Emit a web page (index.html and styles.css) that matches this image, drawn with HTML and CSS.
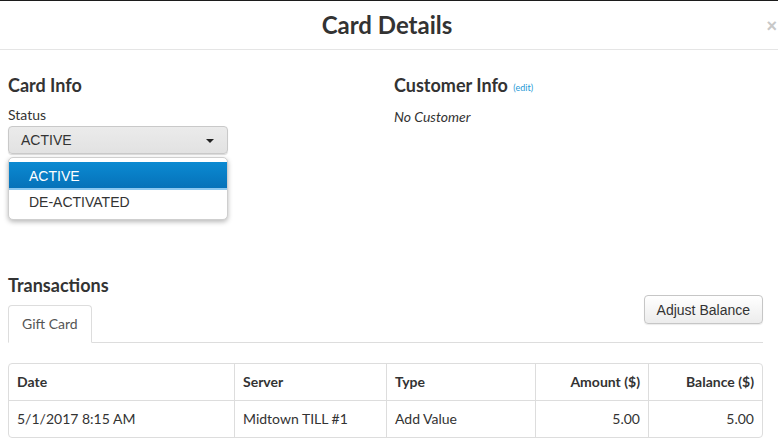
FILE: index.html
```html
<!DOCTYPE html>
<html lang="en">

<head>
    <meta charset="UTF-8">
    <meta name="viewport" content="width=device-width, initial-scale=1.0">
    <title>Card Details</title>
    <link rel="stylesheet" href="styles.css">
</head>

<body>
    <div class="modal">
        <!-- Header -->
        <div class="modal-header">
            <h2 class="modal-title">Card Details</h2>
            <span class="close">&times;</span>
        </div>

        <div class="modal-body">
            <div class="info-row">
                <div class="info-col">
                    <h3>Card Info</h3>
                    <div class="label">Status</div>
                    <div class="select-wrap">
                        <div class="select">ACTIVE<span class="caret"></span></div>
                        <!-- open dropdown -->
                        <ul class="select-menu">
                            <li class="selected">ACTIVE</li>
                            <li>DE-ACTIVATED</li>
                        </ul>
                    </div>
                </div>
                <div class="info-col">
                    <h3>Customer Info <a class="edit" href="#">(edit)</a></h3>
                    <div class="no-customer">No Customer</div>
                </div>
            </div>

            <h3 class="tx-title">Transactions</h3>
            <div class="tabbar">
                <div class="tab active">Gift Card</div>
                <button class="btn">Adjust Balance</button>
            </div>

            <table class="tx-table">
                <colgroup>
                    <col style="width: 225px">
                    <col style="width: 152px">
                    <col style="width: 149px">
                    <col style="width: 113px">
                    <col>
                </colgroup>
                <thead>
                    <tr>
                        <th>Date</th>
                        <th>Server</th>
                        <th>Type</th>
                        <th class="num">Amount ($)</th>
                        <th class="num">Balance ($)</th>
                    </tr>
                </thead>
                <tbody>
                    <tr>
                        <td>5/1/2017 8:15 AM</td>
                        <td>Midtown TILL #1</td>
                        <td>Add Value</td>
                        <td class="num">5.00</td>
                        <td class="num">5.00</td>
                    </tr>
                </tbody>
            </table>
        </div>
    </div>
</body>

</html>
```

FILE: styles.css
```css
body {
    margin: 0;
    font-family: Lato, "Open Sans", sans-serif;
    font-size: 14px;
    line-height: 20px;
    color: #333;
    background: #fff;
}

.modal {
    border-top: 1px solid #1c1c1c;
}

.modal-header {
    position: relative;
    height: 48px;
    border-bottom: 1px solid #e5e5e5;
    text-align: center;
    padding-right: 4px;
}

.modal-title {
    margin: 0;
    font-size: 24px;
    font-weight: 700;
    line-height: 48px;
    color: #333;
}

.close {
    position: absolute;
    right: 1px;
    top: 15px;
    font-family: "Liberation Sans", Arial, sans-serif;
    font-size: 18px;
    font-weight: 700;
    color: #c8c8c8;
}

.modal-body {
    padding: 25px 15px 0 8px;
}

h3 {
    margin: 0;
    font-size: 18px;
    font-weight: 700;
    line-height: 20px;
}

.info-row {
    display: grid;
    grid-template-columns: 386px 1fr;
}

.info-col h3 {
    margin-bottom: 10px;
}

.edit {
    font-size: 9px;
    font-weight: 400;
    color: #1e9ad6;
    text-decoration: none;
    margin-left: 1px;
    vertical-align: 1px;
}

.no-customer {
    font-style: italic;
    margin-top: -1px;
}

.select-wrap {
    position: relative;
    width: 220px;
    margin-top: 1px;
}

.select {
    position: relative;
    height: 26px;
    line-height: 26px;
    padding-left: 12px;
    border: 1px solid #c9c9c9;
    border-radius: 4px;
    background: linear-gradient(#ebebeb, #e2e2e2);
    box-shadow: 0 1px 1px rgba(0, 0, 0, 0.15);
    font-family: "Liberation Sans", Arial, sans-serif;
    font-size: 14px;
    color: #333;
}

.caret {
    position: absolute;
    right: 13px;
    top: 12px;
    border-left: 4px solid transparent;
    border-right: 4px solid transparent;
    border-top: 4px solid #222;
}

.select-menu {
    position: absolute;
    left: 0;
    top: 31px;
    width: 218px;
    margin: 0;
    padding: 4px 0 4px;
    list-style: none;
    background: #fff;
    border: 1px solid #cfcfcf;
    border-radius: 5px;
    box-shadow: 0 2px 5px rgba(0, 0, 0, 0.28);
    font-family: "Liberation Sans", Arial, sans-serif;
    font-size: 14px;
    color: #333;
}

.select-menu li {
    height: 25px;
    line-height: 25px;
    padding-left: 20px;
}

.select-menu li.selected {
    height: 26px;
    line-height: 28px;
    color: #fff;
    background: linear-gradient(#0b8ad2, #0672b9);
    border-bottom: 2px solid #8cc8f0;
}

.tx-title {
    margin-top: 121px;
}

.tabbar {
    display: flex;
    justify-content: space-between;
    align-items: flex-start;
    border-bottom: 1px solid #ddd;
    height: 47px;
}

.tab {
    margin-top: 10px;
    padding: 8px 13px;
    border: 1px solid #ddd;
    border-bottom-color: #fff;
    border-radius: 4px 4px 0 0;
    background: #fff;
    color: #555;
}

.btn {
    height: 29px;
    padding: 0 12px;
    border: 1px solid #c6c6c6;
    border-radius: 4px;
    background: linear-gradient(#fff, #ececec);
    box-shadow: 0 1px 1px rgba(0, 0, 0, 0.08);
    font-family: "Liberation Sans", Arial, sans-serif;
    font-size: 14px;
    color: #333;
}

.tx-table {
    width: 755px;
    margin-top: 20px;
    table-layout: fixed;
    border-collapse: separate;
    border-spacing: 0;
    border: 1px solid #ddd;
    border-radius: 4px;
}

.tx-table th,
.tx-table td {
    padding: 8px 8px;
    line-height: 20px;
    text-align: left;
    border-left: 1px solid #ddd;
}

.tx-table th:first-child,
.tx-table td:first-child {
    border-left: none;
}

.tx-table th {
    font-weight: 700;
    border-bottom: 1px solid #ddd;
}

.tx-table .num {
    text-align: right;
}
```
